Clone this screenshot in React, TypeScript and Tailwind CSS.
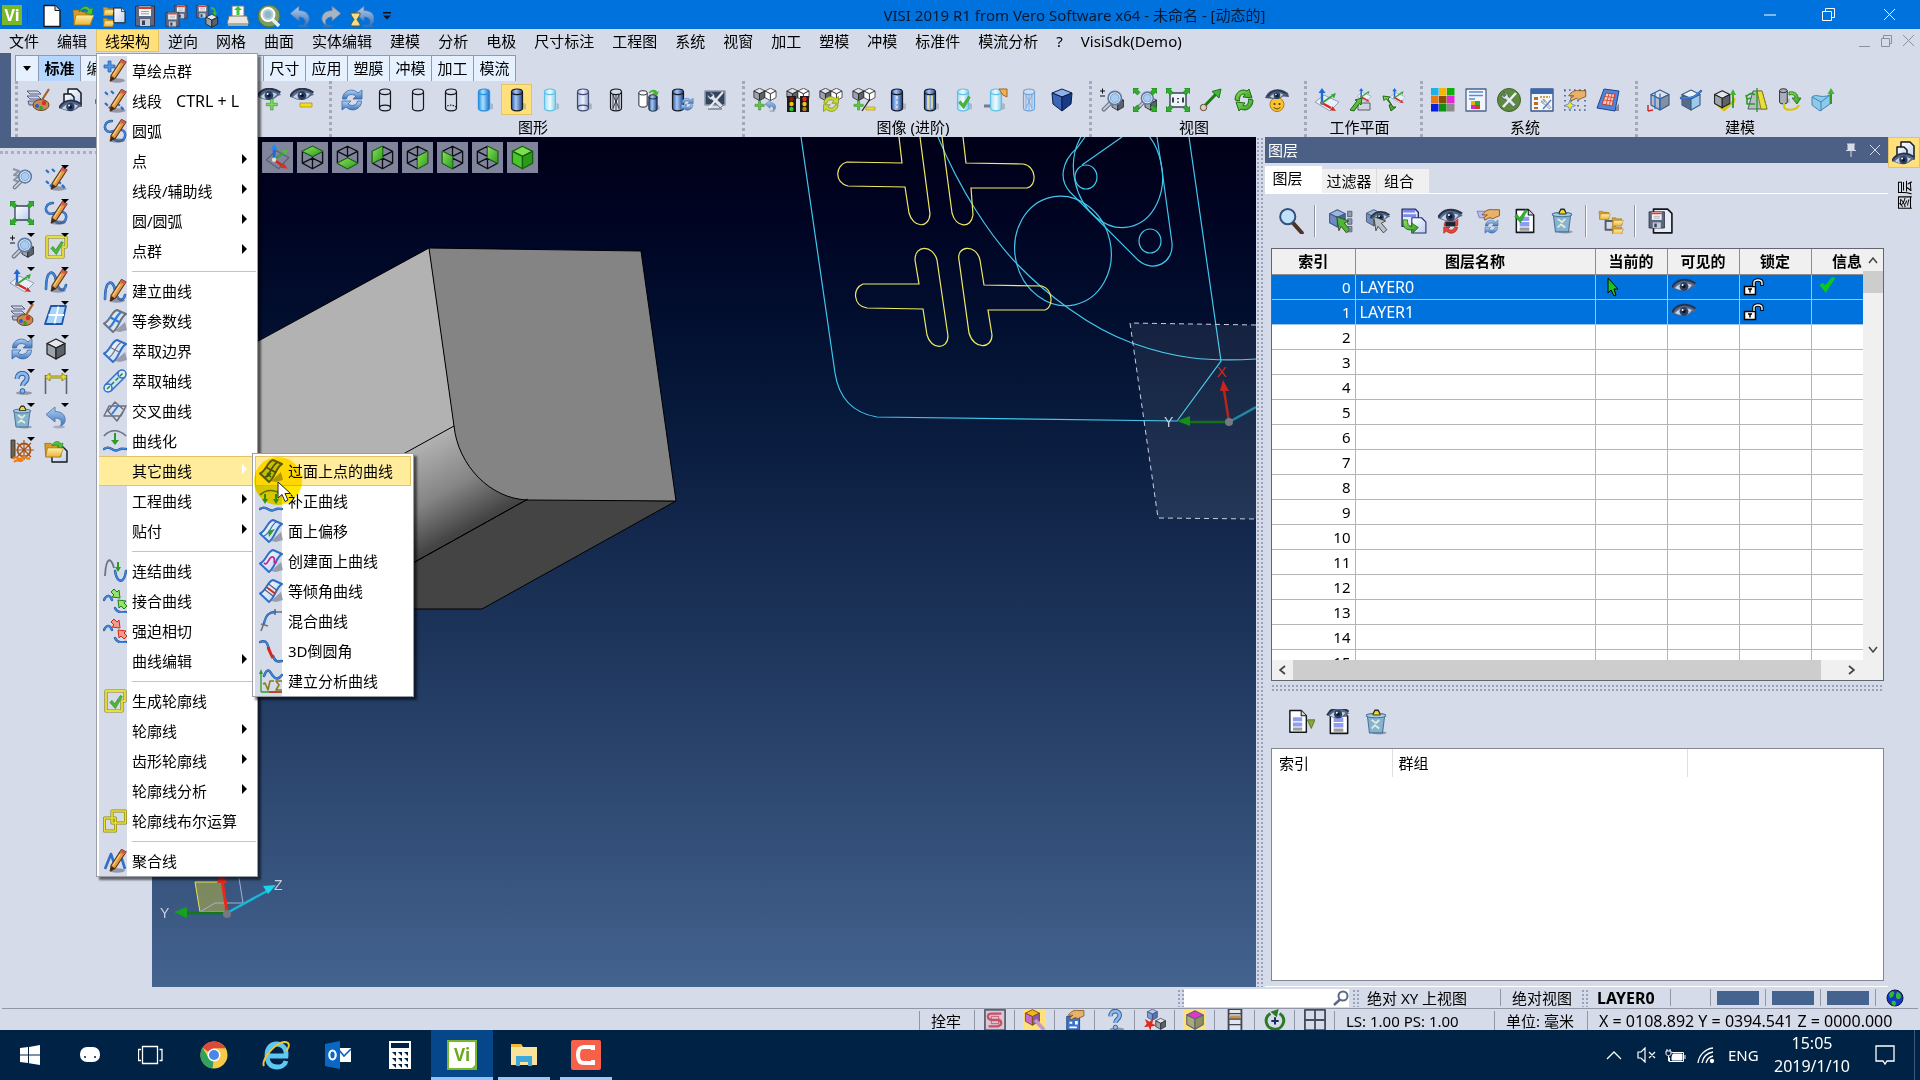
import React from "react";

type Kids = { children?: React.ReactNode };

/* ---------- drawing helpers (24 x 24 canvas) ---------- */

function Ico({ children, className = "size-6" }: Kids & { className?: string }) {
  return (
    <svg viewBox="0 0 24 24" className={`${className} shrink-0`} aria-hidden="true" fill="none" strokeLinejoin="round">
      {children}
    </svg>
  );
}

function At({ x = 0, y = 0, s = 1, children }: Kids & { x?: number; y?: number; s?: number }) {
  return <g transform={`translate(${x} ${y}) scale(${s})`}>{children}</g>;
}

function Defs() {
  return (
    <svg width="0" height="0" className="absolute" aria-hidden="true">
      <defs>
        <linearGradient id="gBlue" x1="0" x2="1">
          <stop offset="0" stopColor="#2c5aa8" />
          <stop offset=".4" stopColor="#a9c8f5" />
          <stop offset="1" stopColor="#1c438a" />
        </linearGradient>
        <linearGradient id="gCyan" x1="0" x2="1">
          <stop offset="0" stopColor="#2a8fe0" />
          <stop offset=".4" stopColor="#a8e2ff" />
          <stop offset="1" stopColor="#1769c8" />
        </linearGradient>
        <linearGradient id="gIce" x1="0" x2="1">
          <stop offset="0" stopColor="#9fdcf2" />
          <stop offset=".5" stopColor="#effbff" />
          <stop offset="1" stopColor="#7fcbe8" />
        </linearGradient>
        <linearGradient id="gPale" x1="0" x2="1">
          <stop offset="0" stopColor="#a9b7dd" />
          <stop offset=".5" stopColor="#eef2ff" />
          <stop offset="1" stopColor="#8c9ccb" />
        </linearGradient>
        <linearGradient id="gGreen" x1="0" y1="0" x2="1" y2="1">
          <stop offset="0" stopColor="#8fe05a" />
          <stop offset="1" stopColor="#2a9a1c" />
        </linearGradient>
        <linearGradient id="gFolder" x1="0" y1="0" x2="0" y2="1">
          <stop offset="0" stopColor="#fff0a8" />
          <stop offset="1" stopColor="#e8b53c" />
        </linearGradient>
        <linearGradient id="gSheet" x1="0" y1="0" x2="1" y2="1">
          <stop offset="0" stopColor="#ffffff" />
          <stop offset="1" stopColor="#b9cff0" />
        </linearGradient>
        <linearGradient id="gArrow" x1="0" y1="0" x2="0" y2="1">
          <stop offset="0" stopColor="#b4d2f3" />
          <stop offset="1" stopColor="#3d74b9" />
        </linearGradient>
      </defs>
    </svg>
  );
}

const Pencil = () => (
  <>
    <ellipse cx="14" cy="21.500" rx="8" ry="2.200" fill="#4b5268" opacity=".5" />
    <path d="M18.500.500l4.500 2.500L12.500 19l-5 3 .500-5.500z" fill="#e09a45" stroke="#5a3410" strokeWidth="1.100" />
    <path d="M18.500.500l4.500 2.500-1.600 2.500-4.500-2.500z" fill="#d9564a" />
    <path d="M8.300 17l-.800 5L12 19.500z" fill="#3b2a1a" />
    <path d="M17 5.500l-7 11" stroke="#f8cf92" strokeWidth="1.200" />
  </>
);

function Cube({ top = "#e4e6ea", left = "#9ea3ab", right = "#5d6168", line = "#1c1e22" }: { top?: string; left?: string; right?: string; line?: string }) {
  return (
    <g stroke={line} strokeWidth="1.200">
      <path d="M12 2l9 4.500-9 4.500-9-4.500z" fill={top} />
      <path d="M3 6.500l9 4.500v11l-9-5z" fill={left} />
      <path d="M21 6.500L12 11v11l9-5z" fill={right} />
    </g>
  );
}

function Cyl({ fill = "none", line = "#15181f", base = "", glow = "" }: { fill?: string; line?: string; base?: string; glow?: string }) {
  return (
    <>
      {fill !== "none" && <path d="M13 23l8-2v-5l-5-2z" fill="#6b7390" opacity=".35" />}
      {glow && <path d="M7 5v15a5 2.500 0 0 0 10 0V5a5 2.500 0 0 0-10 0z" stroke={glow} strokeWidth="3.500" opacity=".6" />}
      <path d="M6.500 4v16a5.500 2.800 0 0 0 11 0V4" fill={fill} stroke={line} strokeWidth="1.200" />
      <ellipse cx="12" cy="3.800" rx="5.500" ry="2.800" fill={fill} stroke={line} strokeWidth="1.200" />
      {base === "line" && <path d="M6.500 20a5.500 2.800 0 0 1 11 0" stroke={line} strokeWidth="1.200" />}
      {base === "dash" && <path d="M6.500 20a5.500 2.800 0 0 1 11 0" stroke={line} strokeWidth="1.200" strokeDasharray="1.500 1.200" />}
      {base === "hatch" && <path d="M9 6.500v15M12 7v15M15 6.500v15M9 7l6 13M15 7L9 20" stroke={line} strokeWidth=".8" />}
    </>
  );
}

const Eye = () => (
  <>
    <path d="M0 13C4 6 12 3 21 7l3 4c-4 0-5 4-11 5-5 .600-9-2-13-3z" fill="#56688a" />
    <path d="M3 13c4-5 10-6 17-3-3 4-5 5-9 5s-6-1-8-2z" fill="#c8d2e2" />
    <circle cx="12" cy="11.500" r="4.400" fill="#2c4066" />
    <circle cx="12" cy="11.500" r="1.800" fill="#0b1220" />
    <circle cx="10.600" cy="10" r="1" fill="#fff" />
    <path d="M0 12.500C4 4.500 14 2 23.500 8.500" stroke="#27334a" strokeWidth="2" />
  </>
);

const Mag = () => (
  <>
    <path d="M9.500 15L3 21.500" stroke="#6f7888" strokeWidth="4.500" strokeLinecap="round" />
    <path d="M9.500 15L3 21.500" stroke="#c9cfda" strokeWidth="2" strokeLinecap="round" />
    <circle cx="14.500" cy="9.500" r="7" fill="#e4effb" stroke="#5f7ba3" strokeWidth="1.800" />
    <circle cx="14.500" cy="9.500" r="4.600" fill="#a9cdf0" stroke="#7d9cc6" strokeWidth="1" />
  </>
);

function Refresh({ c = "url(#gArrow)", line = "#3568a8" }: { c?: string; line?: string }) {
  return (
    <g fill={c} stroke={line} strokeWidth=".8">
      <path d="M2.500 11C2.500 3 12-1 18 5l4-3v9h-9l3-3C11 5 7 7 6.500 11z" />
      <path d="M21.500 13c0 8-9.500 12-15.500 6l-4 3v-9h9l-3 3c4 3 9 1 9.500-3z" />
    </g>
  );
}

const Undo = ({ c = "url(#gArrow)" }: { c?: string }) => (
  <>
    <ellipse cx="15" cy="22" rx="6" ry="1.500" fill="#6b7390" opacity=".45" />
    <path d="M2 9.500L11 2v4.500c8 0 11 5 10 10-1 3-3 4-4.500 4.500 2-4 .500-8-5.500-8V17z" fill={c} stroke="#4f79ad" strokeWidth=".9" />
  </>
);

function Patch({ fill = "url(#gSheet)", line = "#2f6fc9", children }: Kids & { fill?: string; line?: string }) {
  return (
    <>
      <path d="M12 22l10-9 2 8-7 2z" fill="#4b5268" opacity=".45" />
      <path d="M1 14.500C7 12 8 3 14 1l9 4C17 8 16 19 10 23z" fill={fill} stroke={line} strokeWidth="2" />
      {children}
    </>
  );
}

const PatchGrid = ({ c = "#2f6fc9", w = 1.2 }: { c?: string; w?: number }) => (
  <path d="M6 18.500C11 16 13 6 18 3.500M7.500 8.500L17 13.500" stroke={c} strokeWidth={w} />
);

const Plus = ({ c = "#5cc83a" }: { c?: string }) => (
  <path d="M10 3h4v6.500h6.500v4H14V20h-4v-6.500H3.500v-4H10z" fill={c} stroke="#2d7d1c" strokeWidth=".8" />
);

const Check = ({ c = "#4cb733" }: { c?: string }) => <path d="M4 12l3-3 4 5L19 2l3 1.500L12 21z" fill={c} stroke="#2b7a1a" strokeWidth=".7" />;

const Corners = ({ c = "#2fae2b" }: { c?: string }) => (
  <g fill={c} stroke="#116b12" strokeWidth=".5">
    <path d="M0 0h5.500l-1 1.500L7 4.500 4.500 7 1.500 4.500 0 5.500z" />
    <path d="M24 0h-5.500l1 1.500L17 4.500 19.500 7l3-2.500L24 5.500z" />
    <path d="M0 24h5.500l-1-1.500L7 19.500 4.500 17l-3 2.500L0 18.500z" />
    <path d="M24 24h-5.500l1-1.500L17 19.500l2.500-2.500 3 2.500 1.500-1z" />
  </g>
);

const Doc = ({ fill = "#fff" }: { fill?: string }) => (
  <>
    <path d="M4 1.500h11l5 5v16H4z" fill={fill} stroke="#14171d" strokeWidth="1.400" />
    <path d="M15 1.500v5h5" fill="#cdd5e2" stroke="#14171d" strokeWidth="1" />
  </>
);

const Folder = () => (
  <>
    <path d="M2 6h7l2 2h9v13H3z" fill="#d89c28" stroke="#8a6414" strokeWidth=".8" />
    <path d="M5 11h18l-4 10H3z" fill="url(#gFolder)" stroke="#a87a1c" strokeWidth=".8" />
  </>
);

const Floppy = () => (
  <>
    <path d="M2.500 2h19v20h-19z" fill="#5c6782" stroke="#2b3247" strokeWidth="1" />
    <path d="M6 2.500h12V12H6z" fill="#f4f5f7" />
    <path d="M6 3h12v2H6z" fill="#d83a2c" />
    <path d="M8 7.500h8M8 9.800h8" stroke="#9aa0ac" />
    <path d="M7 15h10v7H7z" fill="#c5cad4" />
    <path d="M9 16.500h3V21H9z" fill="#39415a" />
  </>
);

const Pages = () => (
  <>
    <path d="M9 1h9l4 4v13H9z" fill="url(#gSheet)" stroke="#15181f" strokeWidth="1.500" />
    <path d="M5 6h7l3 3v9H5z" fill="url(#gSheet)" stroke="#15181f" strokeWidth="1.500" />
    <At y={8} s={0.95}><Eye /></At>
  </>
);

const Palette = () => (
  <>
    <path d="M1 3h11l3 3H4zM1 8h11l3 3H4z" fill="#cfd4f4" stroke="#4b5069" strokeWidth=".9" />
    <path d="M2 13h9v4H3z" fill="#b6bcc9" stroke="#4b5069" strokeWidth=".9" />
    <ellipse cx="15" cy="17" rx="8" ry="5.500" fill="#c58b52" stroke="#5c3a18" strokeWidth=".9" />
    <circle cx="11" cy="18" r="2" fill="#2b58d8" />
    <circle cx="15" cy="20" r="1.900" fill="#27a737" />
    <circle cx="18" cy="15" r="2.200" fill="#dd2f26" />
    <path d="M23 1l-7 11" stroke="#a2622a" strokeWidth="2.200" />
  </>
);

const Trash = () => (
  <>
    <ellipse cx="15" cy="22" rx="7" ry="1.500" fill="#555d74" opacity=".5" />
    <path d="M9 5l2-4h3l2 4z" fill="#f1dc21" stroke="#222" strokeWidth="1" />
    <path d="M4 6h16l-2 16H6z" fill="#86b3d1" stroke="#4a7595" strokeWidth="1" />
    <ellipse cx="12" cy="6" rx="9" ry="2" fill="#a8cde2" stroke="#4a7595" strokeWidth="1" />
    <path d="M9 5.500l2-4h3l2 4z" fill="#f1dc21" stroke="#222" strokeWidth=".8" />
    <path d="M8 10l4 3 3-3M8 18l3-3 4 3" stroke="#e5f0d9" strokeWidth="1.600" />
  </>
);

const Help = () => (
  <>
    <ellipse cx="14" cy="22" rx="8" ry="1.800" fill="#4b5268" opacity=".5" />
    <path d="M7 8c0-8 11-7 10-.500-.500 3.500-4.500 4-4.500 7.500" stroke="#2d5f9f" strokeWidth="5" />
    <path d="M7 8c0-8 11-7 10-.500-.500 3.500-4.500 4-4.500 7.500" stroke="#8cb8ea" strokeWidth="3" />
    <circle cx="12.500" cy="20" r="2.400" fill="#8cb8ea" stroke="#2d5f9f" strokeWidth="1" />
  </>
);

const Hand = () => <path d="M2 8c3-5 8-7 12-6h8v7l-5 2c-2 2-5 1-6 0l-6 3-1-3 4-3z" fill="#e9b26a" stroke="#7c4d17" strokeWidth="1" />;

const Axes = () => (
  <>
    <path d="M0 14l9-7 15 7-9 9z" fill="#e9effa" stroke="#8a96af" strokeWidth=".9" />
    <path d="M7 15V4" stroke="#1c6ad8" strokeWidth="2.400" />
    <path d="M7 0l3.500 5h-7z" fill="#1c6ad8" />
    <path d="M7 15l10-7" stroke="#35a43a" strokeWidth="2" />
    <path d="M21 5l-2 5.500-3-4z" fill="#35a43a" />
    <path d="M7 15l9 5" stroke="#d7281c" strokeWidth="2.400" />
    <path d="M21 23l-6-.800 2.500-4z" fill="#d7281c" />
    <circle cx="7" cy="15" r="2" fill="#777" />
  </>
);

const Gear = () => <path d="M5 3a5 5 0 0 1 6 5l9 9-3 3-9-9a5 5 0 0 1-5-6l3 3 2.500-2.500z" fill="#dfe4ec" stroke="#4b5569" strokeWidth="1" />;

const Cyls3 = () => (
  <>
    <At s={0.62} x={-1} y={-1}><Cube /></At>
    <At s={0.62} x={10} y={-1}><Cube top="#fff" left="#fff" right="#fff" /></At>
  </>
);

function Swoop({ d, c = "#3f85e0", w = 2.4 }: { d: string; c?: string; w?: number }) {
  return (
    <>
      <path d={d} stroke="#1d4b8c" strokeWidth={w} strokeLinecap="round" />
      <path d={d} stroke={c} strokeWidth={w - 0.8} strokeLinecap="round" />
    </>
  );
}

const Frame = ({ c = "#e8e03a" }: { c?: string }) => (
  <>
    <path d="M3 2h19v10h-3v10H3z" stroke="#8a841a" strokeWidth="3.200" />
    <path d="M3 2h19v10h-3v10H3z" stroke={c} strokeWidth="1.800" />
  </>
);

/* ---------- icon sets ---------- */

const quickIcons: [string, React.ReactNode][] = [
  ["新建", <Doc />],
  ["打开", <><Folder /><path d="M8 8c3-7 9-7 11-3l3-2-1 8-7-2 3-2c-2-3-5-2-9 1z" fill="#4fc23a" stroke="#22801a" strokeWidth=".7" /></>],
  ["项目", <><At s={0.55}><Folder /></At><At s={0.55} y={11}><Folder /></At><At s={0.7} x={9} y={3}><Doc fill="url(#gSheet)" /></At></>],
  ["保存", <Floppy />],
  ["全部保存", <><At s={0.65} x={9}><Floppy /></At><At s={0.7} y={7}><Floppy /></At></>],
  ["另存", <><At s={0.62}><Floppy /></At><At s={0.65} x={9} y={9}><Cube /></At><path d="M16 3c4 0 5 3 5 6l2-1-3 4-3-4 2 .500c0-3-1-3-3-3z" fill="#42b52f" /></>],
  ["打印", <><path d="M6 2h12v11H6z" fill="#fff" stroke="#777" /><path d="M12 2l4 4h-2.500v5h-3V6H8z" fill="#3cc43a" /><path d="M3 12h18l2 8H1z" fill="#e8e6df" stroke="#77756c" /><path d="M2 20h20v2H2z" fill="#aba89d" /></>],
  ["预览", <><circle cx="12" cy="12" r="11" fill="#7b9c63" stroke="#4e6d3a" /><path d="M15 15l7 7" stroke="#e8ecf2" strokeWidth="3.500" /><circle cx="11" cy="10.500" r="6.500" fill="#b9ccd8" stroke="#fff" strokeWidth="2" /><circle cx="11" cy="10.500" r="3.500" fill="#8fb7c7" /></>],
  ["撤消", <Undo />],
  ["重做", <g transform="translate(24 0) scale(-1 1)"><Undo c="#a9b4c2" /></g>],
  ["历史", <><At x={3}><Undo /></At><path d="M1 9h9v2l-3 4.500 3 4.500v2H1v-2l3-4.500L1 11z" fill="#f0df86" stroke="#6d5317" strokeWidth="1" /></>],
];

const g1: React.ReactNode[] = [
  <Palette />,
  <Pages />,
  <At y={2}><Plus /></At>,
  <Eye />,
  <Eye />,
  <Cube />,
  <Cube />,
  <><At y={-4}><Eye /></At><At s={0.65} x={7} y={9}><Plus c="#7ad957" /></At></>,
  <><At y={-4}><Eye /></At><path d="M10 15h12v4H10z" fill="#f5dc1e" stroke="#a38e0a" strokeWidth=".7" /></>,
];

const g2: React.ReactNode[] = [
  <Refresh />,
  <Cyl base="line" />,
  <Cyl />,
  <Cyl base="dash" />,
  <Cyl fill="url(#gCyan)" line="#2a8fe0" glow="#8fd6ff" />,
  <Cyl fill="url(#gBlue)" />,
  <Cyl fill="url(#gIce)" line="#5fc0e6" glow="#b5ecff" />,
  <Cyl fill="url(#gPale)" line="#3c4a70" base="line" />,
  <Cyl base="hatch" />,
  <><At s={0.75} x={-3} y={2}><Cyl fill="#fff" /></At><At s={0.75} x={7} y={6}><Cyl fill="url(#gBlue)" /></At><path d="M12 4c4-4 8-2 8 0l2-1-2 5-5-3 2-.500c-1-1-3 0-5 1z" fill="#43b52f" /></>,
  <><At x={-4}><Cyl fill="url(#gBlue)" /></At><At s={0.6} x={10} y={9}><Refresh /></At></>,
  <><path d="M2 3h20v14H2z" fill="#33445e" stroke="#8e98a8" strokeWidth="1.500" /><path d="M5 21h14" stroke="#8e98a8" strokeWidth="2" /><At s={0.9} x={2} y={2}><Gear /></At><path d="M20 4L6 20" stroke="#e5e9f0" strokeWidth="2" /></>,
];

const g3: React.ReactNode[] = [
  <><Cyls3 /><At s={0.55} y={11}><Plus /></At><At s={0.55} x={11} y={11}><Undo /></At></>,
  <><Cyls3 /><path d="M1 8h9v16H1zM14 8h9v16h-9z" fill="#1c1c1c" /><g><circle cx="5.500" cy="11" r="2.200" fill="#8c1a12" /><circle cx="5.500" cy="16" r="2.200" fill="#f0c419" /><circle cx="5.500" cy="21" r="2.200" fill="#38c02c" /><circle cx="18.500" cy="11" r="2.200" fill="#f0281c" /><circle cx="18.500" cy="16" r="2.200" fill="#f0c419" /><circle cx="18.500" cy="21" r="2.200" fill="#a8861a" /></g></>,
  <><Cyls3 /><At s={0.75} x={3} y={7}><Refresh c="#c8d832" line="#6a7a12" /></At></>,
  <><Cyls3 /><At s={0.55} y={11}><Plus /></At><path d="M10 23l8-12" stroke="#222" strokeWidth="1.300" /><path d="M14 19h9v3h-9z" fill="#f5dc1e" stroke="#a38e0a" strokeWidth=".6" /></>,
  <><Cyl fill="url(#gBlue)" /><path d="M12 8v12" stroke="#fff" strokeDasharray="3 2" /></>,
  <><Cyl fill="url(#gBlue)" /><path d="M10 7.500v13M14 7.500v13" stroke="#f0e890" strokeWidth="1.600" /></>,
  <><Cyl fill="url(#gIce)" line="#5fc0e6" /><At s={0.65} x={5} y={7}><Check /></At></>,
  <><Cyl fill="url(#gIce)" line="#5fc0e6" /><path d="M15 1h8v8l-4-2z" fill="#f0b05c" stroke="#a5641a" /><path d="M0 18h6" stroke="#737b90" strokeWidth="3" /></>,
  <Cyl base="hatch" line="#6aa5df" />,
  <><path d="M12 1l10 4-10 4L2 5z" fill="#8fb0ea" stroke="#0c1c46" /><path d="M2 5l10 4v14L3 16z" fill="#3d66ba" stroke="#0c1c46" /><path d="M22 5L12 9v14l9-7z" fill="#173a86" stroke="#0c1c46" /></>,
];

const g4: React.ReactNode[] = [
  <><At s={0.65} x={10} y={8}><Cube /></At><At s={0.95} x={1} y={1}><Mag /></At><path d="M0 3h5M2.500 .5v5M0 8h5" stroke="#111" /></>,
  <><At s={0.65} x={10} y={8}><Cube /></At><At s={0.85} x={2} y={2}><Mag /></At><Corners /></>,
  <><path d="M4 5h16v14H4z" fill="#eef3fc" stroke="#3a435a" strokeWidth="1.400" /><path d="M7 9.500v5M17 9.500v5M12 10v1.200M12 13.500v1.200" stroke="#111" strokeWidth="1.600" /><Corners /></>,
  <><circle cx="4.500" cy="19.500" r="3.200" fill="#e6cdb5" stroke="#59493a" /><path d="M6.500 17L17 6" stroke="#1c7a1a" strokeWidth="3" /><path d="M22 1l-2 9-7-6.500z" fill="#44b739" stroke="#1c7a1a" /></>,
  <g fill="url(#gGreen)" stroke="#1d6a17"><path d="M3 12C3 4 10 0 15 3l2-2 3 9-9-1 2-2.500C9 5 7 9 7.500 13z" /><path d="M21 12c0 8-7 12-12 9l-2 2-3-9 9 1-2 2.500c4 1.500 6-2.500 5.500-6.500z" /></g>,
  <><circle cx="12" cy="16.500" r="7" fill="#f8c431" stroke="#b1791a" /><circle cx="9.500" cy="16" r="1.100" fill="#5b3606" /><circle cx="14.500" cy="16" r="1.100" fill="#5b3606" /><path d="M8.500 19c2 2.500 5 2.500 7 0" stroke="#5b3606" /><path d="M0 10C3 1 15-2 23 5l1 4-10-1-4 3z" fill="#45536f" /><At s={0.75} x={3} y={-1}><Eye /></At></>,
];

const g5: React.ReactNode[] = [
  <Axes />,
  <><At s={0.6} x={9} y={0}><Axes /></At><path d="M10 15h12v7H10z" fill="#cfd3da" stroke="#555c6c" /><path d="M2 22l7-9-2-1 7-2-1 7-1.500-1.500L6 23z" fill="url(#gGreen)" stroke="#1d6a17" /></>,
  <><At s={0.65} x={9} y={0}><Axes /></At><path d="M2 8l7 1-2 2 5 8h3l-5 4-2-6 2-.500-5-6-2 2z" fill="url(#gGreen)" stroke="#1d6a17" /></>,
];

const g6: React.ReactNode[] = [
  <>{["#18b4e8", "#f0b90a", "#0cb00c", "#e87a12", "#8c4a08", "#e428d8", "#0a1ee0", "#109010", "#8a8a8a"].map((c, i) => <path key={c} d={`M${(i % 3) * 8} ${Math.floor(i / 3) * 8}h7.500v7.500h-7.500z`} fill={c} />)}</>,
  <><path d="M2 1h20v22H2z" fill="#f3f5fa" stroke="#4a6488" strokeWidth="1.300" /><path d="M5 4h14M5 7.500h14M5 11h6" stroke="#5c8ad0" strokeWidth="1.600" /><path d="M7 13h4v4H7z" fill="#e8b010" /><path d="M11 13h5v4h-5z" fill="#22b030" /><path d="M7 17h4v4H7z" fill="#d428c8" /><path d="M11 17h5v4h-5z" fill="#d83a2c" /></>,
  <><circle cx="12" cy="12" r="11.500" fill="#5e8a3f" stroke="#3f6228" /><At s={0.85} x={2} y={2}><Gear /></At><path d="M19 5L6 19" stroke="#eceff4" strokeWidth="2.500" /></>,
  <><path d="M1 1h22v22H1z" fill="#f4f6fb" stroke="#35598e" strokeWidth="1.400" /><path d="M1 1h22v5H1z" fill="#3c68ae" /><path d="M4 9h4v3H4zM4 14h4v3H4zM4 19h4v2H4z" fill="#b4702a" /><path d="M10 9h10" stroke="#c9a838" strokeWidth="2" strokeDasharray="2 1" /><At s={0.55} x={10} y={10}><Gear /></At><path d="M21 12l-8 9" stroke="#5b7fb5" strokeWidth="1.500" /></>,
  <><path d="M1 2h22M1 22h22M2 2v20M22 2v20M8 7v15M15 7v15" stroke="#4b5b84" strokeWidth="1.600" strokeDasharray="1.600 3.400" /><At s={0.85} x={4} y={1}><Hand /></At><path d="M7 12l1.500 4 4 1.500-4 1.500L7 23l-1.500-4-4-1.500 4-1.500z" fill="#f6e32a" stroke="#4a8ad0" strokeWidth=".8" /></>,
  <><path d="M18 23l5-8v8z" fill="#4b5268" opacity=".6" /><path d="M8 1l15 2-4 20-18-3z" fill="#4f86dc" stroke="#1e448c" /><path d="M10 5l9 1-3 12-10-2z" fill="#f7c8bc" stroke="#c23a28" /><path d="M9 8.500l9 1M8 12l9 1M13 5.500l-3 12M16 6l-3 12" stroke="#d14a36" strokeWidth=".9" /></>,
];

const g7: React.ReactNode[] = [
  <><At x={2}><Cube top="#dfe4ec" left="#b4bac6" right="#878e9c" line="#3a5c96" /></At><path d="M9 4v17M14 5.500v16" stroke="#2f6fc9" strokeWidth="1.300" /><path d="M2 23v-6M2 23l5-1" stroke="#d7281c" strokeWidth="1.500" /></>,
  <><Cube top="#e9f3fb" left="#5a6b86" right="#9ccbe8" line="#41618a" /><Swoop d="M2 10c8-1 10 3 20-7" /></>,
  <><path d="M2 13l10 9 10-9v-3" stroke="#d8c40a" strokeWidth="2.600" /><At s={0.85} x={0} y={1}><Cube /></At><path d="M21 20V6" stroke="#2d9a25" strokeWidth="1.800" /><path d="M21 1l3 6h-6z" fill="#3db531" /></>,
  <><path d="M8 3h9l5 18H3z" fill="#b8bdc6" stroke="#555c6c" /><path d="M17 3l5 18h-6L12 3z" fill="#e8df3a" stroke="#8a841a" /><path d="M12 0v24" stroke="#2d9a25" strokeWidth="1.400" /><path d="M2 8c3-3 6-3 8-1M1 7l1 4 4-1M2 10v6h8" stroke="#2d9a25" strokeWidth="1.600" /></>,
  <><At s={0.7} x={-3} y={0}><Cyl fill="#a9afb9" /></At><path d="M11 4c6-1 9 2 9 6h3l-4 6-5-6h3c0-3-2-4-6-3z" fill="url(#gGreen)" stroke="#1d6a17" strokeWidth=".8" /><path d="M6 15v4c2 4 12 4 15-2" stroke="#d8c40a" strokeWidth="2" /></>,
  <><path d="M1 9c5-4 8 2 18-2v9L9 23 1 17z" fill="#8cc9ea" stroke="#3f86b4" /><path d="M1 9l9 5 9-7M10 14v9" stroke="#3f86b4" /><path d="M20 16V5" stroke="#2d9a25" strokeWidth="2" /><path d="M20 0l3.500 6h-7z" fill="#3db531" /></>,
];

const ribbonGroups: { label: string; items: React.ReactNode[]; active?: number }[] = [
  { label: "", items: g1 },
  { label: "图形", items: g2, active: 5 },
  { label: "图像 (进阶)", items: g3 },
  { label: "视图", items: g4 },
  { label: "工作平面", items: g5 },
  { label: "系统", items: g6 },
  { label: "建模", items: g7 },
];

const lineDash = <path d="M2 3l4 4M8 2l3 3M2 14l6 6M14 14l8 8" stroke="#2f6fc9" strokeWidth="2.200" strokeDasharray="4 1.500" />;
const circleLoop = <Swoop d="M9 2C2 2 0 9 4 12s9-2 15-1c5 2 4 11-3 11-4 0-6-2-6-5" />;
const sCurve = <Swoop d="M2 20C2 0 10 0 12 11s8 13 10 5" w={2.6} />;

const sideIcons: { icon: React.ReactNode; drop: boolean }[] = [
  { icon: <><path d="M3 2l6 2-5 4 5 1-5 4 5 2" stroke="#8b94a5" strokeWidth="2" /><At s={0.9} x={2} y={1}><Mag /></At></>, drop: false },
  { icon: <>{lineDash}<Pencil /></>, drop: true },
  { icon: <><path d="M5 5h14v14H5z" fill="url(#gSheet)" stroke="#3a435a" strokeWidth="1.300" /><Corners /></>, drop: false },
  { icon: <>{circleLoop}<Pencil /></>, drop: true },
  { icon: g4[0], drop: true },
  { icon: <><Frame /><At s={0.7} x={4} y={5}><Check /></At></>, drop: true },
  { icon: <Axes />, drop: true },
  { icon: <>{sCurve}<Pencil /></>, drop: true },
  { icon: <Palette />, drop: true },
  { icon: <><path d="M7 3h15l-4 18H1z" fill="#a9d4fa" stroke="#1e56a8" strokeWidth="1.800" /><path d="M14.500 3.500l-4 17M4.500 12h15.500" stroke="#fff" strokeWidth="1.800" /></>, drop: true },
  { icon: <Refresh />, drop: true },
  { icon: <Cube />, drop: true },
  { icon: <Help />, drop: true },
  { icon: <><path d="M1.500 4v19M22.500 4v19" stroke="#5c6475" strokeWidth="1.600" /><path d="M1 6l5-4v3h12V2l5 4-5 4V7H6v3z" fill="#e6dc30" stroke="#8a841a" strokeWidth=".9" /></>, drop: true },
  { icon: <Trash />, drop: true },
  { icon: <Undo />, drop: true },
  { icon: <><path d="M1 1h4v18H1z" fill="#6d6252" stroke="#2f2a22" strokeWidth=".8" /><circle cx="14" cy="11" r="6.500" stroke="#a5561c" strokeWidth="1.800" /><path d="M14 1v20M4 11h20M7 4l14 14M21 4L7 18" stroke="#a5561c" strokeWidth="1.200" /><path d="M3 20c4-5 5 3 9-1s4 3 8 0M4 23c4-4 5 1 9-2" stroke="#f07c14" strokeWidth="2.200" /></>, drop: true },
  { icon: <><path d="M8 8h11l4 4v11H8z" fill="url(#gSheet)" stroke="#14171d" strokeWidth="1.400" /><At s={0.9} x={-1} y={-1}><Folder /></At><path d="M8 6c3-5 8-4 9-1l2-1-1 5-5-1 2-1c-2-2-4-1-7 0z" fill="#4fc23a" stroke="#22801a" strokeWidth=".6" /></>, drop: false },
];

type MenuItem = { text: string; icon?: React.ReactNode; sub?: boolean; key?: string; open?: boolean } | null;

const arrowPair = (c: string, l: string) => (
  <g fill={c} stroke={l} strokeWidth="1">
    <path d="M8 3l3-3 3 3 2-2 1 8-8-1 2-2z" />
    <path d="M24 17l-3 3-3-3-2 2-1-8 8 1-2 2z" />
  </g>
);

const menuItems: MenuItem[] = [
  { text: "草绘点群", icon: <><path d="M5 2h3v4h4v3H8v4H5V9H1V6h4z" fill="#4f93e6" stroke="#1d5bb0" strokeWidth=".7" /><Pencil /></> },
  { text: "线段", key: "CTRL + L", icon: <>{lineDash}<Pencil /></> },
  { text: "圆弧", icon: <>{circleLoop}<Pencil /></> },
  { text: "点", sub: true },
  { text: "线段/辅助线", sub: true },
  { text: "圆/圆弧", sub: true },
  { text: "点群", sub: true },
  null,
  { text: "建立曲线", icon: <>{sCurve}<Pencil /></> },
  { text: "等参数线", icon: <Patch fill="#dfe3ea" line="#6b7382"><PatchGrid c="#2f7de0" w={2.4} /></Patch> },
  { text: "萃取边界", icon: <Patch><PatchGrid c="#6b7382" /></Patch> },
  { text: "萃取轴线", icon: <><path d="M2 16L16 2l6 6L8 22z" fill="#cfe0f8" stroke="#2f6fc9" strokeWidth="1.500" /><circle cx="5" cy="19" r="4" fill="#dcebfb" stroke="#2f6fc9" strokeWidth="1.500" /><circle cx="19" cy="5" r="4" fill="#dcebfb" stroke="#2f6fc9" strokeWidth="1.500" /><path d="M4 20L20 4" stroke="#1d8a2a" strokeWidth="1.500" strokeDasharray="4 2" /></> },
  { text: "交叉曲线", icon: <><path d="M1 17L6 7h17l-5 10zM5 12l7-9 9 8-7 11z" stroke="#6b7282" strokeWidth="1.500" fill="#dfe3ea" fillOpacity=".5" /><path d="M9 15l6-8" stroke="#2f7de0" strokeWidth="2" /></> },
  { text: "曲线化", icon: <><path d="M1 7C7 0 16 0 23 7" stroke="#6b7382" strokeWidth="1.700" /><path d="M12 4v8" stroke="#2d9a25" strokeWidth="2" /><path d="M12 16l-4-5h8z" fill="#2d9a25" /><Swoop d="M1 20c7-5 8 4 14 1 4-2 5-1 8-1" /></> },
  { text: "其它曲线", sub: true, open: true },
  { text: "工程曲线", sub: true },
  { text: "贴付", sub: true },
  null,
  { text: "连结曲线", icon: <><path d="M2 17C3-3 8-2 11 9" stroke="#6b7382" strokeWidth="1.800" /><path d="M15 3v6" stroke="#2d9a25" strokeWidth="2" /><path d="M15 13l-3-5h6z" fill="#2d9a25" /><Swoop d="M12 12c2 12 9 14 11 0" /></> },
  { text: "接合曲线", icon: <><Swoop d="M1 11c3-6 6-5 8 0M12 19c2 5 8 5 11 4" />{arrowPair("#8fe66a", "#1d7a17")}</> },
  { text: "强迫相切", icon: <><Swoop d="M1 11c3-6 6-5 8 0M12 19c2 5 8 5 11 4" />{arrowPair("#f79a88", "#cf2818")}</> },
  { text: "曲线编辑", sub: true },
  null,
  { text: "生成轮廓线", icon: <><Frame /><At s={0.7} x={4} y={5}><Check /></At></> },
  { text: "轮廓线", sub: true },
  { text: "齿形轮廓线", sub: true },
  { text: "轮廓线分析", sub: true },
  { text: "轮廓线布尔运算", icon: <><path d="M1.500 9h11v13h-11zM9 2h13.500v12H9z" stroke="#8a841a" strokeWidth="3" /><path d="M1.500 9h11v13h-11zM9 2h13.500v12H9z" stroke="#ece22e" strokeWidth="1.600" /></> },
  null,
  { text: "聚合线", icon: <><path d="M2 20L8 5l4 12L17 4l5 16" stroke="#2f6fc9" strokeWidth="2.600" /><Pencil /></> },
];

const subItems: { text: string; icon: React.ReactNode }[] = [
  { text: "过面上点的曲线", icon: <Patch fill="#c8d0d8" line="#5b6470"><PatchGrid c="#4d5560" w={1.6} /><path d="M8 14l4 4M12 14l-4 4" stroke="#2b6a22" strokeWidth="1.500" /></Patch> },
  { text: "补正曲线", icon: <><path d="M1 6C7 0 16 0 23 6" stroke="#6b7382" strokeWidth="1.700" /><path d="M6 5v7M17 5v7" stroke="#2d9a25" strokeWidth="2" /><path d="M6 15l-3-5h6zM17 15l-3-5h6z" fill="#2d9a25" /><Swoop d="M1 20c7-5 8 4 14 1 4-2 5-1 8-1" /></> },
  { text: "面上偏移", icon: <Patch><path d="M5 17C11 15 12 6 17 3" stroke="#2f6fc9" strokeWidth="1.200" /><path d="M16 10l-7 2 1 6z" fill="#2d9a25" /></Patch> },
  { text: "创建面上曲线", icon: <Patch><path d="M5 14c4 4 5-8 9-6s-2 8 4 5" stroke="#c02896" strokeWidth="1.800" /></Patch> },
  { text: "等倾角曲线", icon: <Patch><path d="M5 10l9 7M9 4.500l9 7" stroke="#555c6c" strokeWidth="1.100" /><path d="M8 8.500l8 6" stroke="#d7281c" strokeWidth="2" /></Patch> },
  { text: "混合曲线", icon: <><path d="M2 22l3-8M2 15l7 2M15 3h8M16 0v6" stroke="#6b7382" strokeWidth="1.600" /><Swoop d="M5 14C7 6 10 3 16 3" /></> },
  { text: "3D倒圆角", icon: <><Swoop d="M1 3c7-3 8 3 9 8M14 17c2 6 5 6 9 5" /><path d="M9 8c2 5 3 8 5 11" stroke="#d7281c" strokeWidth="3" /></> },
  { text: "建立分析曲线", icon: <><path d="M2 23V3M2 23h20" stroke="#2d9a25" strokeWidth="1.300" /><path d="M10 23h13" stroke="#d7281c" strokeWidth="1.500" /><path d="M2 0l2 5H0z" fill="#2d9a25" /><Swoop d="M5 7c4-10 6-4 9 0s6 3 9-1" /><path d="M4 15l2-1 3 7 2-9h4M23 12h-6l3 4-3 5h6" stroke="#857e1a" strokeWidth="1.600" /></> },
];

const menus = ["文件", "编辑", "线架构", "逆向", "网格", "曲面", "实体编辑", "建模", "分析", "电极", "尺寸标注", "工程图", "系统", "视窗", "加工", "塑模", "冲模", "标准件", "模流分析", "?", "VisiSdk(Demo)"];

/* ---------- title bar ---------- */

function TitleBar() {
  return (
    <header className="flex h-[29px] shrink-0 items-center bg-[#0072de]">
      <div className="ml-[2px] flex h-5 w-5 items-center justify-center bg-[#7ab82a] text-[16px] leading-5 font-bold text-white">Vi</div>
      <div className="mr-2 ml-[5px] h-4 w-px bg-[#0a5fb8]" />
      <div className="flex">
        {quickIcons.map(([name, icon]) => (
          <button key={name} aria-label={name} className="flex h-[29px] w-[31px] items-center justify-center pt-[3px]">
            <Ico>{icon}</Ico>
          </button>
        ))}
      </div>
      <button aria-label="自定义快速访问" className="flex w-5 justify-center">
        <Ico className="size-3"><path d="M4 6h16v3H4zM4 13h16l-8 8z" fill="#101018" /></Ico>
      </button>
      <h1 className="flex-1 truncate pl-3 text-center text-[15px] leading-5 text-[#0a1830]">VISI 2019 R1 from Vero Software x64 - 未命名 - [动态的]</h1>
      <div className="flex">
        <button aria-label="最小化" className="flex h-[29px] w-[59px] items-center justify-center"><svg width="12" height="12" aria-hidden="true"><path d="M0 6h12" stroke="#fff" /></svg></button>
        <button aria-label="还原" className="flex h-[29px] w-[59px] items-center justify-center"><svg width="13" height="13" fill="none" stroke="#fff" aria-hidden="true"><path d="M.5 3.500h9v9h-9zM3.500 3V.5h9v9H10" /></svg></button>
        <button aria-label="关闭" className="flex h-[29px] w-[62px] items-center justify-center"><svg width="13" height="13" fill="none" stroke="#fff" aria-hidden="true"><path d="M1 1l11 11M12 1L1 12" /></svg></button>
      </div>
    </header>
  );
}

/* ---------- menus ---------- */

function SubMenu() {
  return (
    <ul className="absolute -top-[3px] left-[153px] z-30 w-[162px] border border-[#9a9ea8] bg-white px-[2px] pt-[2px] shadow-[3px_3px_2px_rgba(0,0,0,0.55)]">
      {subItems.map((it, i) => (
        <li key={it.text}>
          <button className={i === 0 ? "flex h-[30px] w-full items-center border border-[#e5c365] bg-[#ffec9c] text-left" : "flex h-[30px] w-full items-center border border-transparent bg-[linear-gradient(90deg,#d6dbe9_27px,#fff_27px)] bg-origin-border text-left"}>
            <span className="flex w-[27px] justify-end"><Ico>{it.icon}</Ico></span>
            <span className="pl-[5px] whitespace-nowrap">{it.text}</span>
          </button>
        </li>
      ))}
    </ul>
  );
}

function DropMenu() {
  return (
    <ul className="absolute top-6 left-0 z-20 w-[162px] border border-[#9a9ea8] bg-white pt-[2px] pr-px pl-[2px] shadow-[3px_3px_2px_rgba(0,0,0,0.55)]">
      {menuItems.map((it, i) =>
        it === null ? (
          <li key={i} role="separator" className="flex h-[10px] items-center">
            <span className="h-full w-[28px] bg-[#d6dbe9]" />
            <span className="ml-[5px] h-px flex-1 bg-[#c4c4c4]" />
          </li>
        ) : (
          <li key={i} className="relative">
            <button className={it.open ? "flex h-[30px] w-full items-center border-y border-[#e5c365] bg-[#ffec9c] text-left" : "flex h-[30px] w-full items-center bg-[linear-gradient(90deg,#d6dbe9_28px,#fff_28px)] text-left"}>
              <span className="flex w-[28px] justify-end">{it.icon && <Ico>{it.icon}</Ico>}</span>
              <span className="flex-1 pl-[5px] whitespace-nowrap">{it.text}{it.key && <span className="pl-[14px] text-[16px]">{it.key}</span>}</span>
              {it.sub && <svg width="5" height="10" className="mr-[9px] mb-1" aria-hidden="true"><path d="M0 0l5 5-5 5z" fill={it.open ? "#fff" : "#000"} /></svg>}
            </button>
            {it.open && <SubMenu />}
          </li>
        )
      )}
    </ul>
  );
}

function MenuBar() {
  return (
    <nav className="flex h-6 shrink-0 bg-[#d6dbe9]">
      {menus.map((m) => (
        <div key={m} className="relative">
          <button className={m === "线架构" ? "h-[23px] border border-[#e5c365] bg-[#ffe07a] px-2 leading-5 whitespace-nowrap" : "h-[23px] border border-transparent px-2 leading-5 whitespace-nowrap"}>{m}</button>
          {m === "线架构" && <DropMenu />}
        </div>
      ))}
      <div className="ml-auto flex items-center gap-2 pr-1 text-[#8a8f9c]">
        <button aria-label="最小化文档"><svg width="14" height="14" aria-hidden="true"><path d="M1 12.500h11" stroke="currentColor" /></svg></button>
        <button aria-label="还原文档"><svg width="14" height="14" fill="none" stroke="currentColor" aria-hidden="true"><path d="M1.500 4.500h8v8h-8zM3.500 4V1.500h8v8H10" /></svg></button>
        <button aria-label="关闭文档"><svg width="14" height="14" stroke="currentColor" aria-hidden="true"><path d="M1 1l11 11M12 1L1 12" /></svg></button>
      </div>
    </nav>
  );
}

/* ---------- ribbon ---------- */

const tabs = ["标准", "编辑", "", "", "", "尺寸", "应用", "塑膜", "冲模", "加工", "模流"];

function Ribbon() {
  return (
    <section className="flex shrink-0 bg-[#4b6084]">
      <div className="ml-[11px] min-w-0 flex-1 bg-[#d6dbe9]">
        <div className="ml-1 flex h-[28px] items-end">
          <button aria-label="页签列表" className="flex h-[26px] w-6 items-center justify-center border border-b-0 border-[#8e99b3] bg-[#e6f1ff]">
            <svg width="8" height="5" aria-hidden="true"><path d="M0 0h8L4 5z" fill="#000" /></svg>
          </button>
          {tabs.map((t, i) => (
            <button key={i} className={i === 0 ? "h-[26px] w-[42px] border-t border-r border-[#8e99b3] bg-[#b5d6ff] pb-px font-bold" : i === 2 ? "h-[26px] w-[57px] border-t border-r border-[#8e99b3] bg-[#e6f1ff]" : "h-[26px] w-[42px] border-t border-r border-[#8e99b3] bg-[#e6f1ff] pb-px"}>{t}</button>
          ))}
        </div>
        <div className="ml-1 flex h-14">
          {ribbonGroups.map((g) => (
            <div key={g.label} className="flex pr-[11px]">
              <div className="mr-[3px] w-[3px] border-l-[3px] border-dotted border-[#a3a9ba]" />
              <div className="flex flex-col items-center">
                <div className="flex pt-[3px]">
                  {g.items.map((icon, i) => (
                    <button key={i} aria-label={`${g.label || "标准"} ${i + 1}`} className={i === g.active ? "mx-px flex h-[31px] w-[31px] items-center justify-center border border-[#e5c365] bg-[#ffe07a]" : "mx-px flex h-[31px] w-[31px] items-center justify-center"}>
                      <Ico>{icon}</Ico>
                    </button>
                  ))}
                </div>
                <span className="leading-6">{g.label}</span>
              </div>
            </div>
          ))}
        </div>
      </div>
    </section>
  );
}

/* ---------- side toolbar ---------- */

function SideBar() {
  return (
    <aside className="w-[152px] shrink-0 bg-[#d6dbe9]">
      <div className="h-[11px] bg-[#4b6084]" />
      <div className="mt-[3px] border-t-[3px] border-dotted border-[#a9afc0]" />
      <div className="mt-2 ml-[5px] grid w-[68px] grid-cols-2">
        {sideIcons.map((it, i) => (
          <button key={i} aria-label={`工具 ${i + 1}`} className="relative flex h-[34px] w-[34px] items-center justify-center">
            <Ico>{it.icon}</Ico>
            {it.drop && <svg width="8" height="4" className="absolute top-[3px] right-1" aria-hidden="true"><path d="M0 0h8L4 4z" fill="#000" /></svg>}
          </button>
        ))}
      </div>
    </aside>
  );
}

/* ---------- 3D view ---------- */

const hexLines = "M12 2l9 4.500v10.500l-9 5-9-5V6.500zM3 6.500l9 4.500 9-4.500M12 11v11M12 2v10.500M3 17l9-4.500 9 4.500";
const viewFaces = ["", "M12 2l9 4.500-9 4.500-9-4.500z", "M3 17l9-4.500 9 4.500-9 5z", "M3 6.500L12 2v10.500L3 17z", "M21 6.500L12 11v11l9-5z", "M3 6.500l9 4.500v11l-9-5z", "M12 2l9 4.500V17l-9-4.500z"];

function ViewButtons() {
  return (
    <div className="absolute top-[5px] left-[110px] flex gap-1">
      {viewFaces.map((f, i) => (
        <button key={i} aria-label={`视角 ${i + 1}`} className="flex h-[31px] w-[31px] items-center justify-center bg-[#80859c]">
          <Ico className="size-[27px]">
            {i === 0 ? <g><path d="M2 14l9-8 11 6-9 10z" stroke="#5a5f72" /><path d="M9 14V4" stroke="#1c6ad8" strokeWidth="2.400" /><path d="M9 0l3 5H6z" fill="#1c8af8" /><path d="M9 14l8-6" stroke="#35a43a" strokeWidth="2" /><path d="M21 5l-2 5-3-4z" fill="#4fc23a" /><path d="M9 14l7 5" stroke="#d7281c" strokeWidth="2.400" /><path d="M21 22l-6-1 2.500-4z" fill="#e7281c" /><circle cx="9" cy="14" r="2" fill="#ddd" /></g> : <><path d={hexLines} stroke="#0d0f14" strokeWidth="1.200" /><path d={f} fill="url(#gGreen)" stroke="#1f7a18" strokeWidth=".8" /></>}
          </Ico>
        </button>
      ))}
      <button aria-label="等角视图" className="flex h-[31px] w-[31px] items-center justify-center bg-[#80859c]">
        <Ico className="size-[27px]"><Cube top="#7be04c" left="#4cc52c" right="#2a9a1c" line="#17620f" /></Ico>
      </button>
    </div>
  );
}

function Scene() {
  return (
    <svg viewBox="152 137 1104 850" preserveAspectRatio="xMinYMin slice" className="absolute inset-0 h-full w-full" fill="none" aria-hidden="true">
      <defs>
        <linearGradient id="fillet" gradientUnits="userSpaceOnUse" x1="440" y1="434" x2="486" y2="518">
          <stop offset="0" stopColor="#b2b2b2" />
          <stop offset=".55" stopColor="#858585" />
          <stop offset="1" stopColor="#444" />
        </linearGradient>
      </defs>
      <g stroke="#000" strokeWidth="1">
        <path d="M240 351L429 248l25 178-214 118z" fill="#b2b2b2" stroke="none" />
        <path d="M454 426c4 39 36 73 74 73L370 588l-130-44z" fill="url(#fillet)" stroke="none" />
        <path d="M528 499l148 2-194 108H330z" fill="#444" />
        <path d="M429 248l212 3 35 250-148-1c-38-1-70-35-74-74z" fill="#848484" />
        <path d="M240 351l189-103M454 426l-214 118M528 499L370 587" />
      </g>
      <g stroke="#41c6ea" strokeWidth="1.200">
        <path d="M801 137l34 236c4 26 18 40 42 44l300 4 44-60-32-224" />
        <path d="M938 137c22 53 52 99 80 128s72 63 114 78 74 19 124 16" />
        <ellipse cx="1063" cy="251" rx="48" ry="55" transform="rotate(-12 1063 251)" />
        <ellipse cx="1118" cy="172" rx="44" ry="56" transform="rotate(-12 1118 172)" />
        <ellipse cx="1086" cy="177" rx="11" ry="12" />
        <ellipse cx="1150" cy="241" rx="11" ry="12" />
        <path d="M1122 137l-40 28M1085 137l-8 11c-16 14-18 32-7 44l68 68c16 14 36 2 34-17l-10-73-5-33" />
      </g>
      <g stroke="#f0ea62" strokeWidth="1.200">
        <path d="M899 137l3 26-55-1c-12 3-13 21 1 24l57 1 4 26c4 15 20 16 21 1l-10-77" />
        <path d="M942 137l10 76c4 15 19 16 21 2l-2-27h56c10-2 10-22-4-24l-57-1-3-26" />
        <path d="M919 284h-56c-11 4-10 22 4 24l56 1 4 26c4 15 21 15 21 1l-11-76c-4-15-22-16-22 0z" />
        <path d="M959 260c-3-14 17-17 21 0l4 25 58 1c12 4 11 22 3 24l-57 0 4 25c0 14-18 15-23-2z" />
      </g>
      <path d="M1130 323l126 2v194l-98-1z" fill="#fff" fillOpacity=".08" />
      <path d="M1256 325l-126-2 28 195 98 1" stroke="#c9cede" strokeDasharray="5 4" />
      <path d="M1229 422l-5-32" stroke="#b8241c" strokeWidth="2.500" />
      <path d="M1223 380l6 11h-9z" fill="#c8241c" />
      <path d="M1229 422h-42" stroke="#16701a" strokeWidth="2.500" />
      <path d="M1177 421l13-5v10z" fill="#139018" />
      <path d="M1229 422l27-15" stroke="#1c8aa5" strokeWidth="2.500" />
      <circle cx="1229" cy="422" r="4" fill="#76797f" />
      <path d="M200 912l-5-30h27l4 30z" fill="#b4b446" fillOpacity=".55" stroke="#e8e24a" />
      <path d="M200 912l15-9h28l-4-25" stroke="#a4b2cc" />
      <path d="M227 913l-5-33" stroke="#e8281c" strokeWidth="3" />
      <path d="M221 872l6 11h-10z" fill="#e8281c" />
      <path d="M227 913h-42" stroke="#117a16" strokeWidth="2.500" />
      <path d="M174 912l13-5v11z" fill="#12a51a" />
      <path d="M227 913l40-22" stroke="#16b8d8" strokeWidth="2.500" />
      <path d="M276 885l-8 9-5-8z" fill="#1cd4ee" />
      <circle cx="227" cy="914" r="4" fill="#76797f" />
      <g fontSize="14" fontFamily="Liberation Sans, sans-serif" stroke="none">
        <text x="1217" y="377" fill="#d8281c" fontSize="15">X</text>
        <text x="1164" y="427" fill="#c9cede">Y</text>
        <text x="160" y="918" fill="#c9cede">Y</text>
        <text x="274" y="890" fill="#c9cede">Z</text>
      </g>
    </svg>
  );
}

/* ---------- layer panel ---------- */

const dots = "bg-[radial-gradient(#9aa2ba_1px,transparent_1px)] bg-[size:4px_4px]";

const LayerDoc = () => (
  <>
    <Doc />
    <path d="M7 8h9v4H7zM7 13h9v4H7z" fill="#8f9df0" />
    <path d="M7 18h9v3H7z" fill="#9b9b9b" />
  </>
);

const selArrow = (c: string) => <path d="M9 8l11 4-4 2 5 6-3 3-5-6-2 4z" fill={c} stroke="#33402c" strokeWidth=".8" />;

const layerTools: (React.ReactNode | null)[] = [
  <><path d="M14 14l8 9" stroke="#4b3524" strokeWidth="3.600" strokeLinecap="round" /><circle cx="9" cy="8" r="7" fill="#bfe2fb" stroke="#33507a" strokeWidth="1.800" /></>,
  null,
  <><At s={0.8}><Cube top="#9db6dd" left="#6c8bc0" right="#46659c" line="#40598a" /></At><path d="M19 3h4v5h-4zM19 10h4v5h-4zM19 17h4v5h-4z" fill="#8c98ad" stroke="#4a5468" strokeWidth=".7" />{selArrow("#4cb733")}</>,
  <><At s={0.75}><Cube top="#9db6dd" left="#7890b8" right="#5a729c" line="#4c6080" /></At><At s={0.75} x={6}><Eye /></At>{selArrow("#b9c0cb")}</>,
  <><path d="M1 1h12l3 3v13H1z" fill="#e8ecff" stroke="#222b66" strokeWidth="1.300" /><path d="M2 3h11M2 7h12" stroke="#7c88e8" strokeWidth="2.400" /><path d="M10 9h9l4 4v10H10z" fill="url(#gSheet)" stroke="#222b66" /><path d="M2 11c-1 8 4 10 9 9v3l5-5-6-4v3c-3 0-4-2-4-6z" fill="url(#gGreen)" stroke="#1d6a17" strokeWidth=".8" /></>,
  <><At s={0.65} x={4} y={9}><Refresh c="#e8453a" line="#8c1a12" /></At><path d="M7 13h9v4H7z" fill="#20242e" /><At s={0.95} y={-3}><Eye /></At></>,
  <><path d="M2 3h12v6H4z" fill="#b4bdf4" stroke="#6f78c4" strokeWidth=".8" /><At s={0.8} x={5} y={0}><Hand /></At><At s={0.6} x={8} y={10}><Refresh /></At></>,
  <><LayerDoc /><At s={0.65} y={0}><Check c="#2fb52a" /></At></>,
  <Trash />,
  null,
  <><path d="M7 4v16h7M7 12h7" stroke="#555c6c" strokeWidth="1.800" /><At s={0.5}><Folder /></At><At s={0.5} x={12} y={6}><Folder /></At><At s={0.5} x={12} y={14}><Folder /></At></>,
  null,
  <><path d="M6 1h13l4 4v18H6z" fill="#e8ecf4" stroke="#14171d" strokeWidth="1.500" /><At s={0.75} x={0} y={2}><Floppy /></At></>,
];

function ToolIcon({ icon }: { icon: React.ReactNode }) {
  return icon === null ? <span className="mx-[5px] h-8 w-[2px] border-l border-[#8e95a8] bg-white" /> : <button aria-label="图层工具" className="flex h-8 w-[37px] items-center justify-center"><Ico className="size-[26px]">{icon}</Ico></button>;
}

const LockIco = () => (
  <svg width="24" height="18" fill="none" aria-hidden="true">
    <path d="M2.500 8.500h11v8h-11z" fill="#fff" stroke="#000" strokeWidth="1.500" />
    <path d="M8 10.500v4M6 11h4" stroke="#000" strokeWidth="1.500" />
    <path d="M12 8V4.500C12 1 20 1 20 5v3" stroke="#000" strokeWidth="3.600" />
    <path d="M12 8V4.500C12 1 20 1 20 5v2" stroke="#fff" strokeWidth="1.400" />
  </svg>
);

function LayerTable() {
  const rows = Array.from({ length: 16 }, (_, i) => i);
  return (
    <div className="mr-1 ml-[6px] flex h-[433px] shrink-0 flex-col border border-[#62666f] bg-white">
      <div className="flex min-h-0 flex-1">
        <div className="min-w-0 flex-1 overflow-hidden">
          <table className="w-[611px] table-fixed border-collapse">
            <colgroup>
              <col className="w-[83px]" />
              <col className="w-[240px]" />
              <col className="w-[72px]" /><col className="w-[72px]" /><col className="w-[72px]" /><col className="w-[72px]" />
            </colgroup>
            <thead>
              <tr className="h-[25px] bg-[#f0f0f0]">
                {["索引", "图层名称", "当前的", "可见的", "锁定", "信息"].map((h) => (
                  <th key={h} className="border-r border-b border-[#8e8e8e] p-0 leading-6 font-bold">{h}</th>
                ))}
              </tr>
            </thead>
            <tbody>
              {rows.map((r) => {
                const sel = r < 2;
                const cell = sel ? "border-r border-b border-[#9cc4ee] p-0" : "border-r border-b border-[#b4b4b4] p-0";
                return (
                  <tr key={r} className={sel ? "h-[25px] bg-[#0072de] text-white" : "h-[25px]"}>
                    <td className={`${cell} pr-1 text-right leading-6`}>{r}</td>
                    <td className={`${cell} pl-1 text-[16px] leading-6`}>{sel ? `LAYER${r}` : ""}</td>
                    <td className={cell}>{r === 0 && <svg width="14" height="20" className="ml-[10px]" aria-hidden="true"><path d="M2 1v15l3-3 3 6 2-1-2-6h4z" fill="#16c422" stroke="#000" /></svg>}</td>
                    <td className={cell}>{sel && <Ico className="-mt-[2px] -mb-[2px] ml-1 size-6"><Eye /></Ico>}</td>
                    <td className={cell}>{sel && <span className="block pl-[2px]"><LockIco /></span>}</td>
                    <td className={cell}>{r === 0 && <Ico className="mb-1 ml-[7px] size-4"><path d="M2 12l4-2 3 4L20 1l3 1L10 22z" fill="#0cc81c" stroke="#0cc81c" strokeWidth="2" /></Ico>}</td>
                  </tr>
                );
              })}
            </tbody>
          </table>
        </div>
        <div className="flex w-5 flex-col items-center bg-[#f0f0f0]">
          <button aria-label="向上滚动" className="flex h-[22px] w-full items-center justify-center"><svg width="10" height="7" fill="none" stroke="#444" strokeWidth="1.500" aria-hidden="true"><path d="M1 6l4-5 4 5" /></svg></button>
          <div className="h-[22px] w-full bg-[#cdcdcd]" />
          <button aria-label="向下滚动" className="mt-auto flex h-[22px] w-full items-center justify-center"><svg width="10" height="7" fill="none" stroke="#444" strokeWidth="1.500" aria-hidden="true"><path d="M1 1l4 5 4-5" /></svg></button>
        </div>
      </div>
      <div className="flex h-5 shrink-0 bg-[#f0f0f0]">
        <button aria-label="向左滚动" className="flex w-[21px] items-center justify-center"><svg width="7" height="10" fill="none" stroke="#444" strokeWidth="1.800" aria-hidden="true"><path d="M6 1L1 5l5 4" /></svg></button>
        <div className="h-full flex-1 bg-[#cdcdcd]" />
        <button aria-label="向右滚动" className="mr-5 flex w-[42px] items-center justify-end pr-2"><svg width="7" height="10" fill="none" stroke="#444" strokeWidth="1.800" aria-hidden="true"><path d="M1 1l5 4-5 4" /></svg></button>
      </div>
    </div>
  );
}

function LayerPanel() {
  return (
    <section className="flex w-[623px] shrink-0 flex-col border-b border-white">
      <div className="flex h-[26px] shrink-0 items-center bg-[#4b6084] pl-[3px] text-white">
        <h2>图层</h2>
        <button aria-label="固定" className="mr-3 ml-auto"><svg width="12" height="14" aria-hidden="true"><path d="M2 1h8M3 1v6h6V1M1 7.500h10M6 8v6" stroke="#d9dce6" fill="#d9dce6" /></svg></button>
        <button aria-label="关闭面板" className="mr-[7px]"><svg width="12" height="12" stroke="#d9dce6" aria-hidden="true"><path d="M1 1l10 10M11 1L1 11" /></svg></button>
      </div>
      <div className="flex h-[31px] shrink-0 items-end border-b border-white">
        <button className="h-[27px] w-[57px] bg-white pr-3 pb-[3px] leading-6">图层</button>
        <button className="h-6 w-[55px] border-r border-[#dcdcdc] bg-[#f0f0f0] leading-6">过滤器</button>
        <button className="h-6 w-[52px] bg-[#f0f0f0] pr-2 leading-6">组合</button>
      </div>
      <div className="flex h-[54px] shrink-0 items-center pl-[7px]">
        {layerTools.map((icon, i) => <ToolIcon key={i} icon={icon} />)}
      </div>
      <LayerTable />
      <div className={`mr-1 ml-[6px] mt-[3px] h-[9px] shrink-0 ${dots}`} />
      <div className="flex h-[55px] shrink-0 items-center pt-[2px] pl-[18px]">
        <ToolIcon icon={<><At s={0.95} x={-3}><LayerDoc /></At><path d="M17 10h7l-3.500 8z" fill="#86a83a" stroke="#556f1c" strokeWidth=".8" /></>} />
        <ToolIcon icon={<><LayerDoc /><At s={0.85} x={1} y={-5}><Eye /></At></>} />
        <ToolIcon icon={<Trash />} />
      </div>
      <div className="mr-1 mb-[5px] ml-[6px] min-h-0 flex-1 border border-[#828790] bg-white">
        <table className="table-fixed border-collapse text-left">
          <thead>
            <tr className="h-[28px]">
              <th className="w-[120px] border-r border-[#e0e0e0] pl-[7px] font-normal">索引</th>
              <th className="w-[295px] border-r border-[#e0e0e0] pl-[6px] font-normal">群组</th>
            </tr>
          </thead>
        </table>
      </div>
    </section>
  );
}

/* ---------- status bars ---------- */

const statusIcons: { icon: React.ReactNode; on?: boolean }[] = [
  { icon: <><path d="M1 1h22v22H1z" fill="#d9c8d2" stroke="#5c6475" strokeWidth="2" /><path d="M19 5H8c-5 0-5 6 0 7h7c5 0 5 6 0 7H5" stroke="#c8506a" strokeWidth="2.500" /><path d="M8 8h8v8H8z" stroke="#c8506a" /></> },
  { icon: <><At s={0.85} x={-1} y={-1}><Cube top="#f5b41e" left="#c96ad0" right="#8a5aa5" line="#7a5418" /></At><path d="M12 12l10 11" stroke="#c39ac8" strokeWidth="4" /></>, on: true },
  { icon: <><path d="M3 8h14v15H3z" fill="#3c74c8" stroke="#24467c" /><path d="M6 14h3v2H6zM12 13h3v4h-3zM6 19h8v2H6z" fill="#fff" /><At s={0.85} x={3} y={0}><Hand /></At></> },
  { icon: <Help /> },
  { icon: <><At s={0.6} x={2} y={-1}><Cube top="#b6c8e8" left="#7f9ccc" right="#5674ad" line="#2b4778" /></At><At s={0.6} x={11} y={9}><Cube /></At><path d="M1 11l5 3 4-3-1 5 5 2-6 1-1 5-2-5-5 1 3-4z" fill="#e02a1c" /></> },
  { icon: <Cube top="#e038c8" left="#a9a878" right="#8f8e60" line="#5c6475" />, on: true },
  { icon: <><path d="M5 0h14v24H5z" fill="#e3e6ee" stroke="#3f4656" strokeWidth="2" /><path d="M6 7h12v4H6z" fill="#c29252" /><path d="M5 5h14M5 11h14M5 17h14" stroke="#3f4656" strokeWidth="1.500" /></> },
  { icon: <><path d="M7 5C-1 10 2 21 11 22s15-11 6-17" stroke="#2d7a25" strokeWidth="3.200" /><path d="M16 0L7 3l7 6z" fill="#2d7a25" /><path d="M12 9v8M8 13h8" stroke="#1c2c6a" strokeWidth="2.200" /></> },
  { icon: <path d="M1 1h22v22H1zM12 1v22M1 12h22" stroke="#454c5e" strokeWidth="2" /> },
];

function StatusBars() {
  return (
    <footer className="shrink-0 bg-[#d6dbe9]">
      <div className="mx-[2px] flex h-[22px] items-center border-b border-[#9297a8]">
        <div className={`ml-auto h-[18px] w-[7px] ${dots}`} />
        <label className="flex h-[18px] w-[165px] items-center bg-white">
          <input type="search" aria-label="查找命令" className="min-w-0 flex-1 bg-transparent px-1 outline-none" />
          <svg width="16" height="16" fill="none" stroke="#5a6a86" strokeWidth="2" aria-hidden="true"><circle cx="10" cy="6" r="4.500" /><path d="M7 9.500L1 15" strokeWidth="2.500" /></svg>
        </label>
        <div className={`ml-[3px] h-[18px] w-[7px] ${dots}`} />
        <span className="h-[17px] w-[142px] border-r border-[#9297a8] pl-2 leading-[19px] whitespace-nowrap">绝对 XY 上视图</span>
        <span className="h-[17px] w-[80px] pl-[11px] leading-[19px]">绝对视图</span>
        <div className={`h-[18px] w-2 ${dots}`} />
        <span className="h-[17px] w-[82px] border-r border-[#9297a8] pl-2 text-[16px] leading-[18px] font-bold">LAYER0</span>
        <span className="h-[17px] w-10 border-r border-[#9297a8]" />
        {[0, 1, 2].map((i) => (
          <span key={i} className="flex h-[17px] w-[55px] items-center justify-center border-r border-[#9297a8]"><span className="h-[14px] w-[42px] bg-[#44638f]" /></span>
        ))}
        <span className="flex w-[42px] justify-center pr-1">
          <svg width="18" height="18" aria-hidden="true"><circle cx="9" cy="9" r="8" fill="#1238c8" stroke="#0a1440" /><path d="M3 5c3-4 6-3 5 0s-1 3-4 4zM11 3c5 1 5 6 2 7s-4-3-2-7zM6 12c4-1 5 2 3 5-3 0-4-3-3-5z" fill="#36b82e" /></svg>
        </span>
      </div>
      <div className="flex h-[21px] items-end">
        <span className="ml-auto h-[19px] w-[55px] border-l border-[#9297a8] pl-[11px] leading-5">拴牢</span>
        {statusIcons.map((s, i) => (
          <span key={i} className="flex h-[20px] w-10 items-center justify-center border-l border-[#9297a8]">
            <button aria-label={`状态 ${i + 1}`} className={s.on ? "flex h-[21px] w-[23px] items-center justify-center bg-[#ffe07a]" : "flex h-[21px] w-[23px] items-center justify-center"}><Ico className="size-[22px]">{s.icon}</Ico></button>
          </span>
        ))}
        <span className="h-[19px] w-[160px] border-l border-[#9297a8] pl-[11px] leading-5 whitespace-nowrap">LS: 1.00 PS: 1.00</span>
        <span className="h-[19px] w-[93px] border-l border-[#9297a8] pl-[11px] leading-5 whitespace-nowrap">单位: 毫米</span>
        <span className="h-[19px] w-[333px] border-l border-[#9297a8] pl-[11px] text-[16px] leading-5 whitespace-nowrap">X = 0108.892 Y = 0394.541 Z = 0000.000</span>
      </div>
    </footer>
  );
}

/* ---------- task bar ---------- */

const apps: { name: string; icon: React.ReactNode; state?: "on" | "run" }[] = [
  { name: "Chrome", icon: <><circle cx="14" cy="14" r="13.500" fill="#f7c948" /><path d="M14 .5a13.500 13.500 0 0 1 11.700 6.800H14L8 10.500 2.600 6.800A13.500 13.500 0 0 1 14 .5z" fill="#dc4a3c" /><path d="M2.500 6.700L9 17.500l4.500 3L12.500 27.400A13.500 13.500 0 0 1 2.500 6.700z" fill="#2fa35b" /><circle cx="14" cy="14" r="6.500" fill="#fff" /><circle cx="14" cy="14" r="5" fill="#4a85e8" /></> },
  { name: "Internet Explorer", icon: <><path d="M5 15h19c1-8-4-12-9.500-12S5 7 5 14.500 9 26 15 26c4 0 8-2 9-6" stroke="#5ec8f5" strokeWidth="4.800" /><path d="M2 25C-2 18 18-4 26 2c2 2 0 6-2 8" stroke="#f5c52e" strokeWidth="2" /></> },
  { name: "Outlook", icon: <><path d="M14 7h13v14H14z" fill="#fff" /><path d="M15 9l5 6 7-7" stroke="#0a62b8" strokeWidth="1.600" /><path d="M1 3l15-3v28L1 25z" fill="#0a68c4" /><ellipse cx="8.500" cy="14" rx="3.200" ry="4.500" stroke="#fff" strokeWidth="2.200" /></> },
  { name: "计算器", icon: <><path d="M3 0h22v28H3z" fill="#fff" /><path d="M5 2h18v5H5z" fill="#002244" />{[0, 1, 2].map((r) => [0, 1, 2].map((c) => <path key={`${r}${c}`} d={`M${6 + c * 6} ${11 + r * 6}h4v4z`} fill="#002244" />))}</> },
  { name: "VISI", state: "on", icon: <><path d="M0 0h28v28H0z" fill="#fff" stroke="#7ab82a" strokeWidth="2" /><path d="M29 22v7h-7z" fill="#7ab82a" /><text x="14" y="20" textAnchor="middle" fontSize="17" fontWeight="bold" fill="#6aa81e" fontFamily="Open Sans, sans-serif">Vi</text></> },
  { name: "文件资源管理器", state: "run", icon: <><path d="M1 3h10l2 3h14v18H1z" fill="#fbe29a" /><path d="M1 3h10l1 3H1z" fill="#f0b93a" /><path d="M6 15h16v10h-4v-4h-8v4H6z" fill="#3ea8dc" /></> },
  { name: "Camtasia", state: "run", icon: <><rect x="-1" y="-1" width="30" height="30" rx="2" fill="#f8604a" /><path d="M21 9V6H12C8 6 6 8 6 14s2 8 6 8h9v-3" stroke="#fff" strokeWidth="4" /></> },
];

function TaskBar() {
  return (
    <div className="flex h-[50px] shrink-0 items-center bg-[#002244] text-white">
      <button aria-label="开始" className="flex w-[60px] justify-center"><svg width="20" height="20" fill="#fff" aria-hidden="true"><path d="M0 3l8-1v7.500H0zM9 1.900L20 0v9.500H9zM0 10.500h8V18l-8-1zM9 10.500h11V20L9 18.200z" /></svg></button>
      <button aria-label="小娜" className="flex w-[60px] justify-center"><svg width="20" height="18" aria-hidden="true"><rect x="0" y="1" width="20" height="15" rx="7" fill="#fff" /><circle cx="5" cy="11" r="1" fill="#002244" /><circle cx="15" cy="11" r="1" fill="#002244" /></svg></button>
      <button aria-label="任务视图" className="mr-[3px] flex w-[60px] justify-center"><svg width="25" height="20" fill="none" stroke="#fff" aria-hidden="true"><path d="M4.500 1.500h15v17h-15zM3 4.500H.5v11H3M21.500 4.500h2.500v11h-2.500" strokeWidth="1.300" /></svg></button>
      {apps.map((a) => (
        <button key={a.name} aria-label={a.name} className={a.state === "on" ? "relative flex h-full w-[62px] items-center justify-center bg-[#05478a]" : "relative flex h-full w-[62px] items-center justify-center"}>
          <svg viewBox="-1 -1 30 30" width="30" height="30" fill="none" aria-hidden="true">{a.icon}</svg>
          {a.state && <span className={a.state === "on" ? "absolute inset-x-0 bottom-0 h-[3px] bg-[#8ec4f8]" : "absolute inset-x-[5px] bottom-0 h-[3px] bg-[#9dc8f0]"} />}
        </button>
      ))}
      <div className="ml-auto flex h-full items-center">
        <button aria-label="显示隐藏的图标" className="w-[31px]"><svg width="16" height="9" fill="none" stroke="#fff" strokeWidth="1.300" aria-hidden="true"><path d="M1 8l7-7 7 7" /></svg></button>
        <button aria-label="音量" className="w-[28px]"><svg width="20" height="16" fill="none" stroke="#fff" strokeWidth="1.200" aria-hidden="true"><path d="M1 5h3l4-4v14l-4-4H1zM12 5l6 6M18 5l-6 6" /></svg></button>
        <button aria-label="电池" className="w-[32px]"><svg width="21" height="15" fill="none" stroke="#fff" aria-hidden="true"><path d="M6.500 4.500h12v9h-14v-4M20 7v4M1 3h5v3c0 2-5 2-5 0zM2 3V1M5 3V1M3.500 8v5H5" /><path d="M8 6h9v6H7V9z" fill="#fff" /></svg></button>
        <button aria-label="网络" className="w-[31px]"><svg width="18" height="17" fill="none" stroke="#fff" strokeWidth="1.300" aria-hidden="true"><path d="M1 16C2 8 8 2 16 1M5 16c1-6 5-10 11-11M9 16c1-4 3-6 7-7" /><circle cx="15" cy="14" r="1.500" fill="#fff" /></svg></button>
        <span className="w-[41px] text-[15px]">ENG</span>
        <div className="w-[86px] text-center text-[16px] leading-[23px]"><div>15:05</div><div>2019/1/10</div></div>
        <button aria-label="通知" className="flex w-[59px] justify-center pr-3"><svg width="20" height="21" fill="none" stroke="#fff" strokeWidth="1.300" className="ml-3" aria-hidden="true"><path d="M1 1h18v15h-7l-2 3-2-3H1z" /></svg></button>
        <span className="mr-[5px] h-full w-px bg-[#40597a]" />
      </div>
    </div>
  );
}

/* ---------- page ---------- */

export default function App() {
  return (
    <div className="relative flex h-screen flex-col overflow-hidden bg-[#d6dbe9] font-['Noto_Sans','Noto_Sans_CJK_SC',sans-serif] text-[15px] leading-5 text-black">
      <Defs />
      <TitleBar />
      <MenuBar />
      <Ribbon />
      <div className="flex min-h-0 flex-1">
        <SideBar />
        <main className="relative min-w-0 flex-1 overflow-hidden bg-gradient-to-b from-[#000018] to-[#44638f]">
          <Scene />
          <ViewButtons />
        </main>
        <div className={`w-[9px] shrink-0 ${dots}`} />
        <LayerPanel />
        <aside className="flex w-8 shrink-0 flex-col items-center">
          <button aria-label="图层面板" className="flex h-[31px] w-full items-center justify-center border border-[#e5c365] bg-[#ffe07a]"><Ico><Pages /></Ico></button>
          <span className="mt-3 -rotate-90 pr-[10px] whitespace-nowrap">图层</span>
        </aside>
      </div>
      <StatusBars />
      <TaskBar />
      <div className="pointer-events-none absolute top-[457px] left-[254px] z-40 size-12 rounded-full bg-[#ffe800] mix-blend-multiply" />
      <svg width="16" height="22" className="pointer-events-none absolute top-[481px] left-[277px] z-50" aria-hidden="true"><path d="M1 1v16l4-3.500 3 7 3-1.500-3-6.500h5.500z" fill="#fff" stroke="#222" /></svg>
    </div>
  );
}
